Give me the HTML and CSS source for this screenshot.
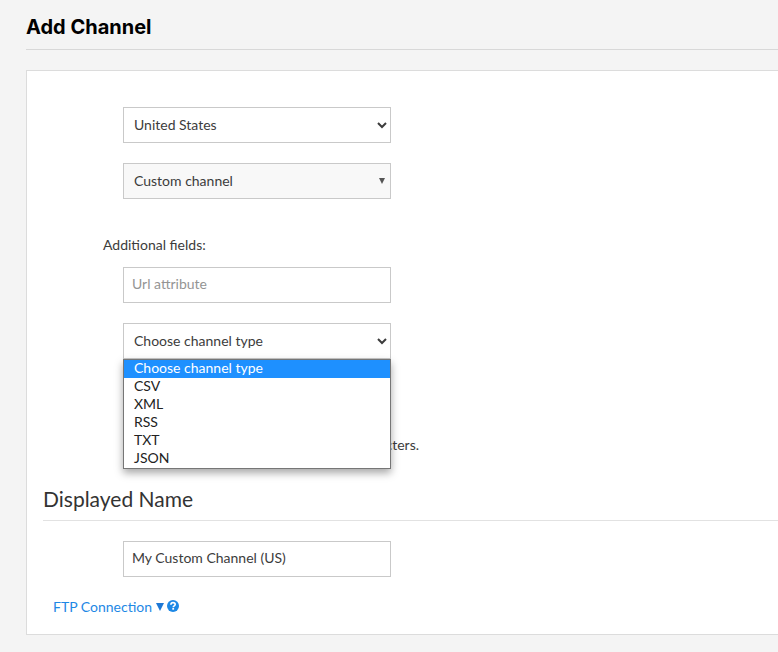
FILE: index.html
```html
<!DOCTYPE html>
<html lang="en">
<head>
    <meta charset="UTF-8">
    <meta name="viewport" content="width=device-width, initial-scale=1.0">
    <title>Add Channel</title>
    <link rel="stylesheet" href="styles.css">
</head>
<body>
    <div class="page">
        <h1>Add Channel</h1>
        <div class="panel">
            <div class="field">
                <select class="control">
                    <option>United States</option>
                </select>
            </div>
            <div class="field field-locked">
                <select class="control control-locked" disabled>
                    <option>Custom channel</option>
                </select>
            </div>

            <div class="fields-label">Additional fields:</div>
            <div class="field">
                <input class="control control-text" type="text" placeholder="Url attribute">
            </div>
            <div class="field field-open">
                <select class="control">
                    <option>Choose channel type</option>
                </select>
                <ul class="dropdown">
                    <li class="selected">Choose channel type</li>
                    <li>CSV</li>
                    <li>XML</li>
                    <li>RSS</li>
                    <li>TXT</li>
                    <li>JSON</li>
                </ul>
            </div>
            <p class="hint">Channel name can't be more than 64 characters.</p>

            <h2>Displayed Name</h2>
            <div class="field">
                <input class="control control-text" type="text" value="My Custom Channel (US)">
            </div>
            <div class="ftp">
                <a href="#">FTP Connection</a>
                <span class="ftp-arrow"></span>
                <svg class="help" viewBox="0 0 12 12" width="12" height="12">
                    <circle cx="6" cy="6" r="6" fill="#1e88e5"/>
                    <path d="M3.9 4.7 C3.9 3.3 4.9 2.6 6 2.6 C7.3 2.6 8.2 3.4 8.2 4.4 C8.2 5.8 6.2 5.8 6.2 7.2" fill="none" stroke="#fff" stroke-width="1.6"/>
                    <rect x="5.3" y="8" width="1.8" height="1.7" fill="#fff"/>
                </svg>
            </div>
        </div>
    </div>
</body>
</html>
```

FILE: styles.css
```css
html, body {
    margin: 0;
    height: 652px;
    overflow: hidden;
}
body {
    font-family: "Lato", "Liberation Sans", sans-serif;
    font-size: 14px;
    color: #3c3c3c;
    background-color: #f4f4f4;
}
.page {
    padding-left: 26px;
}
h1 {
    margin: 0 0 20px;
    padding: 15px 0 9px;
    height: 25px;
    line-height: 25px;
    font-family: "Inter", "Liberation Sans", sans-serif;
    font-size: 20px;
    font-weight: 700;
    color: #000;
    border-bottom: 1px solid #d8d8d8;
}
.panel {
    box-sizing: border-box;
    height: 565px;
    padding: 36px 0 0 96px;
    background-color: #fff;
    border: 1px solid #dcdcdc;
    border-right: none;
}
.field {
    position: relative;
    width: 268px;
    margin-bottom: 20px;
}
.control {
    display: block;
    box-sizing: border-box;
    width: 268px;
    height: 36px;
    padding: 0 6px 2px;
    font-family: inherit;
    font-size: 14px;
    color: #3c3c3c;
    background-color: #fff;
    border: 1px solid #c9c9c9;
    border-radius: 0;
    outline: none;
}
.control-locked {
    appearance: none;
    padding-left: 10px;
    background-color: #f8f8f8;
    opacity: 1;
}
.field-locked::after {
    content: "";
    position: absolute;
    top: 15px;
    right: 6px;
    border-left: 3.5px solid transparent;
    border-right: 3.5px solid transparent;
    border-top: 6px solid #555;
}
.control-text {
    padding: 0 8px 3px;
}
.control-text::placeholder {
    color: #949494;
}
.fields-label {
    margin: 36px 0 12px -20px;
    line-height: 20px;
}
.field-open {
    margin-bottom: 0;
}
.dropdown {
    position: absolute;
    top: 36px;
    left: 0;
    box-sizing: border-box;
    width: 268px;
    height: 110px;
    margin: 0;
    padding: 0;
    list-style: none;
    background-color: #fff;
    color: #222;
    border: 1px solid #767676;
    box-shadow: 0 4px 8px rgba(0, 0, 0, 0.35);
}
.dropdown li {
    height: 18px;
    padding-left: 10px;
    line-height: 16px;
}
.dropdown .selected {
    background-color: #1e90ff;
    color: #fff;
}
.hint {
    margin: 76px 0 0;
    line-height: 20px;
}
h2 {
    margin: 29px 0 20px -80px;
    padding-bottom: 7px;
    line-height: 29px;
    font-size: 21px;
    font-weight: 400;
    color: #333;
    border-bottom: 1px solid #e2e2e2;
}
.ftp {
    display: flex;
    align-items: center;
    gap: 4px;
    margin-left: -70px;
    margin-top: -1px;
    height: 20px;
}
.ftp a {
    color: #1e88e5;
    text-decoration: none;
}
.ftp-arrow {
    margin-top: 2px;
    margin-right: -1px;
    border-left: 4.5px solid transparent;
    border-right: 4.5px solid transparent;
    border-top: 8px solid #1e78d5;
}
```
